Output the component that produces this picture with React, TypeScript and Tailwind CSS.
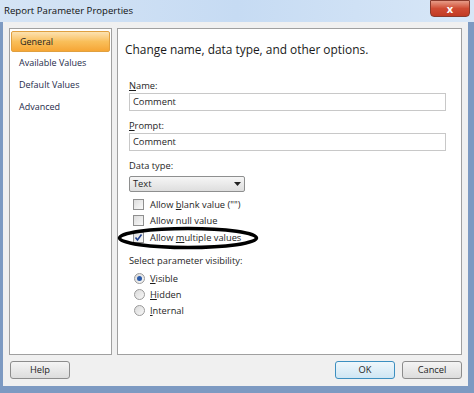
import React from "react";

const font = { fontFamily: '"Open Sans", "Noto Sans", sans-serif' };

function Check({ checked }: { checked?: boolean }) {
  return (
    <span className="w-[11px] h-[11px] border border-[#8f8f8f] bg-gradient-to-br from-[#dcdcdc] to-[#fafafa] flex items-center justify-center shrink-0">
      {checked && (
        <svg width="9" height="9" viewBox="0 0 9 9">
          <path d="M1.5 4.5 L3.5 7 L7.5 1.5" stroke="#1f3f8f" strokeWidth="1.6" fill="none" />
        </svg>
      )}
    </span>
  );
}

function Radio({ checked }: { checked?: boolean }) {
  return (
    <span className="w-[11px] h-[11px] rounded-full border border-[#9a9a9a] bg-gradient-to-br from-[#dadada] to-[#f8f8f8] flex items-center justify-center shrink-0">
      {checked && <span className="w-[5px] h-[5px] rounded-full bg-[#2a5aa8]" />}
    </span>
  );
}

export default function App() {
  return (
    <div className="w-[474px] h-[393px] flex flex-col bg-[#7d9ac2] overflow-hidden text-[#1e1e1e]" style={font}>
      {/* Title bar */}
      <div className="h-[22px] flex items-start justify-between bg-gradient-to-r from-[#d5e4f5] via-[#c6dbf3] to-[#d8e7f7] relative">
        <span className="text-[9.6px] leading-none pl-[4px] pt-[6px] text-[#111]">Report Parameter Properties</span>
        <div className="mr-[4px] w-[40px] h-[17px] rounded-b-[4px] bg-gradient-to-b from-[#e69a86] via-[#cf4b33] to-[#c23a22] border border-[#8a3a2c] flex items-center justify-center">
          <span className="text-white text-[11px] font-bold leading-none">x</span>
        </div>
      </div>
      {/* Body */}
      <div className="flex-1 ml-[3px] mr-[6px] mb-[7px] bg-[#f0f0f0] flex flex-col px-[6px] pt-[6px]">
        <div className="flex gap-[5px] h-[327px]">
          {/* Nav */}
          <div className="w-[103px] bg-white border border-[#a0a0a0] p-[1px] flex flex-col text-[9px] text-[#1e2a4a]">
            <div className="h-[21px] mt-[1px] flex items-center pl-[8px] bg-gradient-to-b from-[#fce2b0] via-[#f9bf5a] to-[#f6a634] border border-[#e0a040] rounded-[2px] text-[#222]">General</div>
            <div className="h-[22px] flex items-center pl-[8px]">Available Values</div>
            <div className="h-[22px] flex items-center pl-[8px]">Default Values</div>
            <div className="h-[22px] flex items-center pl-[8px]">Advanced</div>
          </div>
          {/* Main */}
          <div className="flex-1 bg-white border border-[#a0a0a0] flex flex-col pl-[11px] pr-[15px] relative">
            <div className="text-[11.9px] mt-[10px] -ml-[4px] leading-[20px] text-[#1a1a1a]">Change name, data type, and other options.</div>
            <div className="text-[9.3px] mt-[20px] leading-[14px]"><u>N</u>ame:</div>
            <div className="mt-[0px] h-[18px] border border-[#c8c8c8] flex items-center px-[3px] text-[9.3px]">Comment</div>
            <div className="text-[9.3px] mt-[8px] leading-[14px]"><u>P</u>rompt:</div>
            <div className="mt-[0px] h-[18px] border border-[#c8c8c8] flex items-center px-[3px] text-[9.3px]">Comment</div>
            <div className="text-[9.3px] mt-[8px] leading-[14px]">Data type:</div>
            <div className="mt-[3px] w-[116px] h-[16px] border border-[#8e8f8f] rounded-[2px] bg-gradient-to-b from-[#f6f6f6] to-[#dedede] flex items-center justify-between px-[3px] text-[9.3px]">
              <span>Text</span>
              <svg width="7" height="4" viewBox="0 0 7 4"><path d="M0 0 L7 0 L3.5 4 Z" fill="#222" /></svg>
            </div>
            <div className="flex flex-col gap-[3px] mt-[6px] pl-[4px] text-[9.3px] relative">
              <div className="flex items-center gap-[6px] h-[13px]"><Check /><span>Allow <u>b</u>lank value ("")</span></div>
              <div className="flex items-center gap-[6px] h-[13px] mt-[0px]"><Check /><span>Allow null value</span></div>
              <div className="flex items-center gap-[6px] h-[13px] mt-[1px]"><Check checked /><span>Allow <u>m</u>ultiple values</span></div>
              <svg className="absolute left-[-12px] top-[28px]" width="142" height="24" viewBox="0 0 142 24">
                <ellipse cx="71" cy="12" rx="68.5" ry="9.5" fill="none" stroke="#000" strokeWidth="3.5" />
              </svg>
            </div>
            <div className="text-[9.3px] mt-[10px] leading-[14px]">Select parameter visibility:</div>
            <div className="flex flex-col gap-[3px] mt-[4px] pl-[5px] text-[9.3px]">
              <div className="flex items-center gap-[5px] h-[13px]"><Radio checked /><span><u>V</u>isible</span></div>
              <div className="flex items-center gap-[5px] h-[13px]"><Radio /><span><u>H</u>idden</span></div>
              <div className="flex items-center gap-[5px] h-[13px]"><Radio /><span><u>I</u>nternal</span></div>
            </div>
          </div>
        </div>
        {/* Buttons */}
        <div className="flex items-center justify-between mt-[6px] text-[9.3px]">
          <button className="w-[60px] h-[18px] border border-[#8c8c8c] rounded-[3px] bg-gradient-to-b from-[#f4f4f4] to-[#dcdcdc] ml-[1px] leading-none">Help</button>
          <div className="flex gap-[7px]">
            <button className="w-[60px] h-[18px] border border-[#3c8fc0] rounded-[3px] bg-gradient-to-b from-[#eef7fc] to-[#cfe6f4] leading-none">OK</button>
            <button className="w-[60px] h-[18px] border border-[#8c8c8c] rounded-[3px] bg-gradient-to-b from-[#f4f4f4] to-[#dcdcdc] leading-none">Cancel</button>
          </div>
        </div>
      </div>
    </div>
  );
}
